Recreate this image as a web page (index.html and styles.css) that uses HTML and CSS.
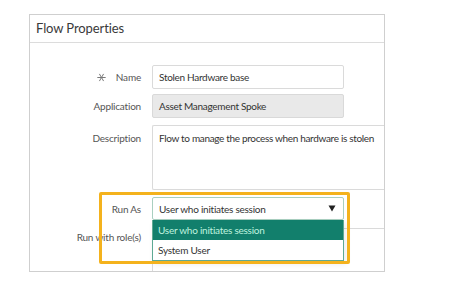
FILE: index.html
```html
<!DOCTYPE html>
<html>
<head>
<meta charset="utf-8">
<link rel="stylesheet" href="styles.css">
</head>
<body>
<div class="stage">
  <div class="panel">
    <div class="head">Flow Properties</div>
    <div class="body">
      <div class="row r-name">
        <div class="lbl"><svg class="req" width="9" height="9" viewBox="0 0 10 10"><g stroke="#777" stroke-width="1.1" stroke-linecap="round"><line x1="0.8" y1="5" x2="9.2" y2="5"/><line x1="2.9" y1="1.4" x2="7.1" y2="8.6"/><line x1="7.1" y1="1.4" x2="2.9" y2="8.6"/></g></svg>Name</div>
        <div class="input">Stolen Hardware base</div>
      </div>
      <div class="row r-app">
        <div class="lbl">Application</div>
        <div class="input ro">Asset Management Spoke</div>
      </div>
      <div class="row r-desc">
        <div class="lbl lbl-top">Description</div>
        <div class="textarea">Flow to manage the process when hardware is stolen</div>
      </div>
      <div class="row r-run">
        <div class="lbl">Run As</div>
        <div class="select-wrap">
          <div class="select"><span>User who initiates session</span><svg class="caret" width="8" height="7" viewBox="0 0 8 7"><path d="M0.5 0.5H7.5L4 6.5Z" fill="#222"/></svg></div>
          <ul class="menu">
            <li class="opt sel">User who initiates session</li>
            <li class="opt">System User</li>
          </ul>
        </div>
      </div>
      <div class="row r-roles">
        <div class="lbl lbl-top">Run with role(s)</div>
        <div class="roles"></div>
      </div>
    </div>
  </div>
  <div class="highlight"></div>
</div>
</body>
</html>
```
FILE: styles.css
```css
* { box-sizing: border-box; }
html, body { margin: 0; padding: 0; background: #fff; }
body { font-family: Lato, "Open Sans", sans-serif; color: #333; }
.stage { position: relative; width: 474px; height: 291px; padding: 14px 0 0 29px; }
.panel { width: 356px; height: 258px; border: 1px solid #cfcfcf; overflow: hidden; background: #fff; }
.head { height: 28px; border-bottom: 1px solid #dcdcdc; padding-left: 6px; font-size: 13px; line-height: 27px; color: #3a3a3a; letter-spacing: -0.1px; }
.body { padding-top: 22px; }
.row { display: grid; grid-template-columns: 111px 1fr; column-gap: 11px; }
.r-app { margin-top: 5px; }
.r-desc { margin-top: 7px; }
.r-run { margin-top: 7px; }
.r-roles { margin-top: 8px; }
.lbl { text-align: right; font-size: 10px; color: #555; display: flex; align-items: center; justify-content: flex-end; white-space: nowrap; letter-spacing: -0.2px; }
.lbl-top { align-items: flex-start; padding-top: 7px; }
.r-roles .lbl-top { padding-top: 3px; }
.req { margin-right: 10px; }
.input { width: 192px; height: 24px; border: 1px solid #dadada; border-radius: 2px; padding: 0 6px; font-size: 10px; line-height: 22px; color: #333; letter-spacing: -0.3px; }
.input.ro { background: #e9e9e9; border-color: #d9d9d9; }
.textarea { height: 65px; border: 1px solid #dadada; border-right: none; border-radius: 2px 0 0 2px; padding: 5px 6px; font-size: 10px; line-height: 14px; color: #333; white-space: nowrap; letter-spacing: -0.33px; }
.select-wrap { position: relative; width: 192px; }
.select { height: 23px; border: 1px solid #a9cfc0; border-radius: 2px; padding: 0 7px 0 6px; display: flex; align-items: center; justify-content: space-between; font-size: 10px; color: #333; background: #fff; letter-spacing: -0.25px; }
.menu { position: absolute; left: 0; top: 23px; width: 192px; margin: 0; padding: 0; list-style: none; border: 1px solid #5ea993; border-top: none; background: #fff; z-index: 2; box-shadow: 2px 3px 6px rgba(0,0,0,0.08); }
.opt { height: 20px; line-height: 20px; padding: 0 5px; font-size: 10px; color: #333; letter-spacing: -0.25px; }
.opt.sel { background: #127f6c; color: #bff3df; }
.roles { height: 70px; border: 1px solid #dadada; border-right: none; }
.highlight { position: absolute; left: 99px; top: 192px; width: 251px; height: 72px; border: 3.5px solid #f4b21d; border-radius: 2px; z-index: 3; pointer-events: none; }
```
